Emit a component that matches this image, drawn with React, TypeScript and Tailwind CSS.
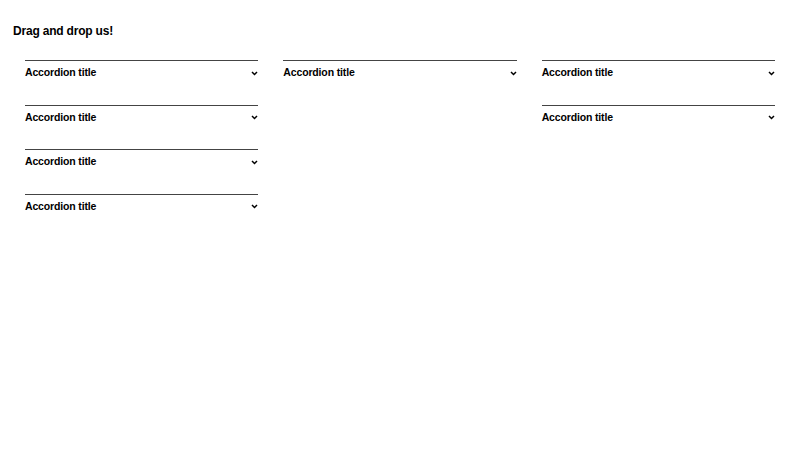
import React from "react";

const columns = [4, 1, 2];

function Chevron() {
  return (
    <svg width="7" height="5" viewBox="0 0 7 5" className="shrink-0">
      <path d="M1 1 L3.5 3.5 L6 1" fill="none" stroke="#000" strokeWidth="1.5" />
    </svg>
  );
}

function AccordionItem() {
  return (
    <div className="border-t border-[#444] mb-[20.5px]">
      <div className="h-[23px] flex items-center justify-between pt-[1px]">
        <span className="text-[10.5px] font-bold text-black tracking-[-0.15px]">Accordion title</span>
        <Chevron />
      </div>
    </div>
  );
}

export default function App() {
  return (
    <div className="min-h-screen bg-white" style={{ fontFamily: '"Liberation Sans", Arial, sans-serif' }}>
      <h1 className="text-[12px] font-bold text-black pl-[13px] pt-[24px] leading-[14px] tracking-[-0.2px]">
        Drag and drop us!
      </h1>
      <div className="grid grid-cols-3 gap-[25px] px-[25px] mt-[22px]">
        {columns.map((n, i) => (
          <div key={i}>
            {Array.from({ length: n }).map((_, j) => (
              <AccordionItem key={j} />
            ))}
          </div>
        ))}
      </div>
    </div>
  );
}
